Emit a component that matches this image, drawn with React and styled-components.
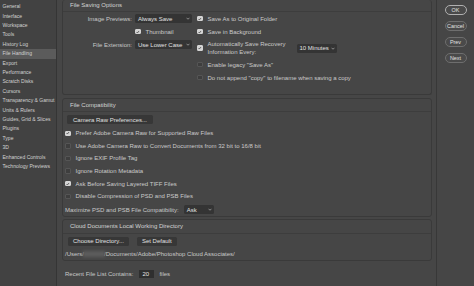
import styled, { createGlobalStyle } from "styled-components";

const GlobalStyle = createGlobalStyle`
  html, body {
    margin: 0;
    padding: 0;
    background: #464646;
  }
  body {
    font-family: "Liberation Sans", Arial, sans-serif;
    color: #cfcfcf;
  }
  #root {
    width: 474px;
    height: 286px;
    overflow: hidden;
  }
`;

const Window = styled.div`
  display: flex;
  width: 474px;
  height: 286px;
  background: #464646;
  overflow: hidden;
`;

const Sidebar = styled.ul`
  width: 57px;
  flex-shrink: 0;
  margin: 0;
  padding: 2.3px 0 0;
  list-style: none;
  box-sizing: border-box;
  background: #424242;
  border-right: 1px solid #353535;
`;

const NavItem = styled.li`
  height: 9.4px;
  line-height: 9.4px;
  font-size: 5.05px;
  padding-left: 2.5px;
  white-space: nowrap;
  overflow: hidden;
  color: #d2d2d2;
  background: ${(p) => (p.$active ? "#5b5b5b" : "transparent")};
`;

const Main = styled.div`
  flex: 1;
  display: flex;
  flex-direction: column;
  padding: 0 4px 0 5px;
  font-size: 6px;
`;

const Group = styled.section`
  display: flex;
  flex-direction: column;
  flex-shrink: 0;
  box-sizing: border-box;
  height: ${(p) => p.$h}px;
  margin-top: ${(p) => p.$mt || 0}px;
  border: 1px solid #3a3a3a;
  border-top: ${(p) => (p.$open ? "none" : "1px solid #3a3a3a")};
  border-radius: 3px;
`;

const GroupTitle = styled.div`
  height: ${(p) => p.$h}px;
  line-height: ${(p) => p.$h}px;
  padding-left: 7px;
  color: #d4d4d4;
  border-bottom: 1px solid #3d3d3d;
  flex-shrink: 0;
`;

const SavingBody = styled.div`
  display: flex;
  gap: 5px;
`;

const FieldGrid = styled.div`
  display: grid;
  grid-template-columns: 69px 57px;
  grid-auto-rows: 13px;
  column-gap: 3px;
  align-items: center;
`;

const Label = styled.span`
  text-align: right;
  white-space: nowrap;
  color: #c9c9c9;
`;

const CheckColumn = styled.div`
  display: flex;
  flex-direction: column;
`;

const CheckRow = styled.div`
  display: flex;
  align-items: center;
  flex-shrink: 0;
  gap: ${(p) => p.$gap || 5}px;
  height: ${(p) => p.$h || 13}px;
  padding-left: ${(p) => p.$pl || 0}px;
  white-space: nowrap;
  color: #cacaca;
`;

const TwoLine = styled.span`
  width: 84px;
  line-height: 8.5px;
  white-space: normal;
`;

const Box = styled.span`
  width: 5.5px;
  height: 5.5px;
  flex-shrink: 0;
  box-sizing: border-box;
  border-radius: 1px;
  display: inline-flex;
  align-items: center;
  justify-content: center;
  background: ${(p) => (p.$on ? "#d4d4d4" : "#3e3e3e")};
  border: 1px solid ${(p) => (p.$on ? "#d4d4d4" : "#555555")};
`;

const Select = styled.span`
  display: flex;
  align-items: center;
  justify-content: space-between;
  box-sizing: border-box;
  width: ${(p) => p.$w}px;
  height: 9px;
  padding: 0 2px 0 3px;
  background: #343434;
  border-radius: 1.5px;
  color: #e2e2e2;
  white-space: nowrap;
`;

const PushButton = styled.span`
  display: inline-flex;
  align-items: center;
  height: 9px;
  padding: 0 ${(p) => p.$px || 5}px;
  background: #373737;
  border-radius: 1.5px;
  color: #e0e0e0;
  white-space: nowrap;
`;

const ButtonRow = styled.div`
  display: flex;
  align-items: center;
  gap: 8px;
  height: ${(p) => p.$h}px;
  padding-left: ${(p) => p.$pl}px;
  flex-shrink: 0;
`;

const TextRow = styled.div`
  display: flex;
  align-items: center;
  gap: ${(p) => p.$gap || 0}px;
  height: ${(p) => p.$h}px;
  padding-left: ${(p) => p.$pl || 2}px;
  white-space: nowrap;
  color: #c9c9c9;
  flex-shrink: 0;
`;

const Blurred = styled.span`
  display: inline-block;
  width: 22px;
  height: 6px;
  margin: 0 -1px;
  background: #5c5c5c;
  filter: blur(1.5px);
`;

const NumberInput = styled.span`
  display: inline-flex;
  align-items: center;
  box-sizing: border-box;
  width: 15px;
  height: 8px;
  padding-left: 3px;
  margin: 0 5px 0 6px;
  background: #2f2f2f;
  color: #e4e4e4;
`;

const Actions = styled.div`
  width: 38px;
  flex-shrink: 0;
  display: flex;
  flex-direction: column;
  align-items: center;
  gap: 6px;
  padding-top: 5px;
  box-sizing: border-box;
  border-left: 1px solid #383838;
`;

const DialogButton = styled.span`
  display: flex;
  align-items: center;
  justify-content: center;
  box-sizing: border-box;
  width: 22px;
  height: 10px;
  border-radius: 5px;
  font-size: 5.4px;
  color: #e2e2e2;
  background: #4a4a4a;
  border: ${(p) => (p.$default ? "1.5px solid #b0b0b0" : "1px solid #6e6e6e")};
`;

function Check({ on }) {
  return (
    <Box $on={on}>
      {on && (
        <svg width="4" height="4" viewBox="0 0 10 10">
          <path d="M1.5 5.2 L4 7.7 L8.6 2.3" fill="none" stroke="#2e2e2e" strokeWidth="2" />
        </svg>
      )}
    </Box>
  );
}

function Chevron() {
  return (
    <svg width="4" height="3" viewBox="0 0 8 6">
      <path d="M1 1.5 L4 4.5 L7 1.5" fill="none" stroke="#bdbdbd" strokeWidth="1.3" />
    </svg>
  );
}

const navItems = [
  "General", "Interface", "Workspace", "Tools", "History Log", "File Handling",
  "Export", "Performance", "Scratch Disks", "Cursors", "Transparency & Gamut",
  "Units & Rulers", "Guides, Grid & Slices", "Plugins", "Type", "3D",
  "Enhanced Controls", "Technology Previews",
];

const compat = [
  ["Prefer Adobe Camera Raw for Supported Raw Files", true],
  ["Use Adobe Camera Raw to Convert Documents from 32 bit to 16/8 bit", false],
  ["Ignore EXIF Profile Tag", false],
  ["Ignore Rotation Metadata", false],
  ["Ask Before Saving Layered TIFF Files", true],
  ["Disable Compression of PSD and PSB Files", false],
];

export default function App() {
  return (
    <>
      <GlobalStyle />
      <Window>
        <Sidebar>
          {navItems.map((n) => (
            <NavItem key={n} $active={n === "File Handling"}>{n}</NavItem>
          ))}
        </Sidebar>

        <Main>
          <Group $h={95} $open>
            <GroupTitle $h={11}>File Saving Options</GroupTitle>
            <SavingBody>
              <FieldGrid>
                <Label>Image Previews:</Label>
                <Select $w={57}>Always Save <Chevron /></Select>
                <span />
                <CheckRow><Check on /> Thumbnail</CheckRow>
                <Label>File Extension:</Label>
                <Select $w={57}>Use Lower Case <Chevron /></Select>
              </FieldGrid>
              <CheckColumn>
                <CheckRow><Check on /> Save As to Original Folder</CheckRow>
                <CheckRow><Check on /> Save in Background</CheckRow>
                <CheckRow $h={20} $gap={5}>
                  <Check on />
                  <TwoLine>Automatically Save Recovery Information Every:</TwoLine>
                  <Select $w={40}>10 Minutes <Chevron /></Select>
                </CheckRow>
                <CheckRow><Check /> Enable legacy "Save As"</CheckRow>
                <CheckRow><Check /> Do not append "copy" to filename when saving a copy</CheckRow>
              </CheckColumn>
            </SavingBody>
          </Group>

          <Group $h={119} $mt={3}>
            <GroupTitle $h={12}>File Compatibility</GroupTitle>
            <ButtonRow $h={15} $pl={4}>
              <PushButton $px={6}>Camera Raw Preferences...</PushButton>
            </ButtonRow>
            {compat.map(([t, on]) => (
              <CheckRow key={t} $h={12.6} $pl={2}><Check on={on} /> {t}</CheckRow>
            ))}
            <TextRow $h={14} $gap={5}>
              Maximize PSD and PSB File Compatibility:
              <Select $w={30}>Ask <Chevron /></Select>
            </TextRow>
          </Group>

          <Group $h={42} $mt={2}>
            <GroupTitle $h={13}>Cloud Documents Local Working Directory</GroupTitle>
            <ButtonRow $h={14} $pl={5}>
              <PushButton>Choose Directory...</PushButton>
              <PushButton>Set Default</PushButton>
            </ButtonRow>
            <TextRow $h={12}>
              /Users/<Blurred />/Documents/Adobe/Photoshop Cloud Associates/
            </TextRow>
          </Group>

          <TextRow $h={26} $pl={3}>
            Recent File List Contains:<NumberInput>20</NumberInput>files
          </TextRow>
        </Main>

        <Actions>
          <DialogButton $default>OK</DialogButton>
          <DialogButton>Cancel</DialogButton>
          <DialogButton>Prev</DialogButton>
          <DialogButton>Next</DialogButton>
        </Actions>
      </Window>
    </>
  );
}
